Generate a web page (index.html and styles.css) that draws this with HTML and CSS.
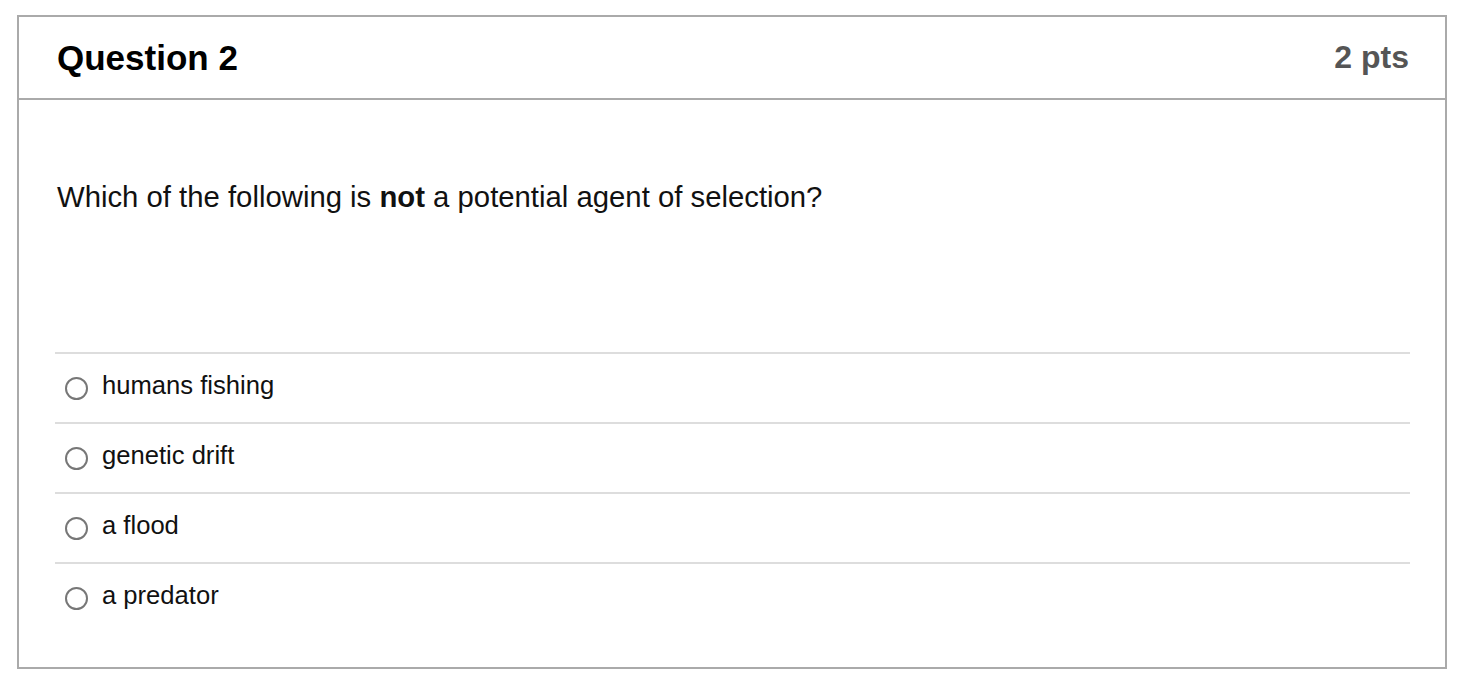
FILE: index.html
```html
<!DOCTYPE html>
<html>
<head>
    <title>Question 2</title>
    <link rel="stylesheet" href="styles.css">
</head>
<body>
    <div class="question">
        <div class="question-header">
            <h2 class="question-title">Question 2</h2>
            <span class="question-points">2 pts</span>
        </div>
        <div class="question-body">
            <p class="question-text">Which of the following is <strong>not</strong> a potential agent of selection?</p>

            <div class="answers">
                <label class="answer">
                    <input type="radio" name="q2" class="answer-radio">
                    <span class="answer-text">humans fishing</span>
                </label>
                <label class="answer">
                    <input type="radio" name="q2" class="answer-radio">
                    <span class="answer-text">genetic drift</span>
                </label>
                <label class="answer">
                    <input type="radio" name="q2" class="answer-radio">
                    <span class="answer-text">a flood</span>
                </label>
                <label class="answer">
                    <input type="radio" name="q2" class="answer-radio">
                    <span class="answer-text">a predator</span>
                </label>
            </div>
        </div>
    </div>
</body>
</html>
```

FILE: styles.css
```css
body {
    font-family: "Liberation Sans", Arial, sans-serif;
    margin: 0;
    padding: 15px 0 0 17px;
    background-color: #fff;
    color: #111;
}

.question {
    width: 1426px;
    border: 2px solid #aaa;
}

.question-header {
    display: flex;
    justify-content: space-between;
    align-items: center;
    height: 81px;
    padding: 0 36px 0 38px;
    border-bottom: 2px solid #aaa;
}

.question-title {
    margin: 0;
    font-size: 35px;
    font-weight: bold;
    color: #000;
}

.question-points {
    font-size: 32px;
    font-weight: bold;
    color: #555;
}

.question-body {
    padding: 80px 35px 35px 36px;
}

.question-text {
    margin: 0 0 138px 2px;
    font-size: 29.3px;
    line-height: 34px;
}

.answer {
    display: flex;
    align-items: center;
    height: 68px;
    border-top: 2px solid #ddd;
    cursor: pointer;
}

.answer-radio {
    appearance: none;
    -webkit-appearance: none;
    width: 23px;
    height: 23px;
    margin: 0 14px 0 10px;
    border: 2px solid #777;
    border-radius: 50%;
    background-color: #fff;
}

.answer-text {
    font-size: 25.6px;
    margin-bottom: 5px;
}
```
